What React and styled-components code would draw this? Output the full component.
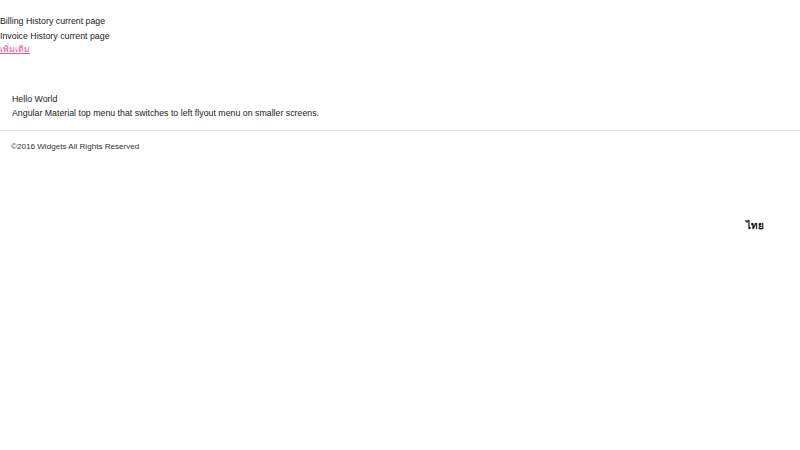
import React from "react";
import styled, { createGlobalStyle } from "styled-components";

const GlobalStyle = createGlobalStyle`
  html, body {
    margin: 0;
    padding: 0;
    background: #ffffff;
    font-family: "Liberation Sans", Arial, sans-serif;
    color: #222222;
  }
`;

const Page = styled.div`
  display: flex;
  flex-direction: column;
  width: 800px;
  height: 450px;
`;

const TopMenu = styled.ul`
  list-style: none;
  margin: 0;
  padding: 14px 0 0 0;
  font-size: 8.8px;
  line-height: 15px;
`;

const MenuItem = styled.li`
  color: #222222;
  line-height: ${(p) => p.$lh || "15px"};
`;

const MoreLink = styled.a`
  color: #e0569b;
  text-decoration: underline;
  font-size: 8.6px;
  line-height: 10px;
  font-family: "Liberation Sans", "Noto Sans", sans-serif;
`;

const Content = styled.main`
  padding: 38px 12px 10px 12px;
  font-size: 8.8px;
  line-height: 14px;
  border-bottom: 1px solid #e5e5e5;
`;

const Line = styled.p`
  margin: 0;
`;

const Footer = styled.footer`
  padding: 10px 11px 10px 11px;
  font-size: 8.1px;
  line-height: 12px;
  color: #333333;
`;

const LangRow = styled.div`
  display: flex;
  justify-content: flex-end;
  padding: 55px 36px 0 0;
`;

const LangButton = styled.span`
  font-size: 10px;
  font-weight: bold;
  color: #111111;
  font-family: "Noto Sans", "Liberation Sans", sans-serif;
  line-height: 14px;
`;

export default function App() {
  return (
    <Page>
      <GlobalStyle />
      <TopMenu>
        <MenuItem>Billing History current page</MenuItem>
        <MenuItem>Invoice History current page</MenuItem>
        <MenuItem $lh="10px">
          <MoreLink href="#">เพิ่มเติม</MoreLink>
        </MenuItem>
      </TopMenu>
      <Content>
        <Line>Hello World</Line>
        <Line>Angular Material top menu that switches to left flyout menu on smaller screens.</Line>
      </Content>
      <Footer>©2016 Widgets All Rights Reserved</Footer>
      <LangRow>
        <LangButton>ไทย</LangButton>
      </LangRow>
    </Page>
  );
}
